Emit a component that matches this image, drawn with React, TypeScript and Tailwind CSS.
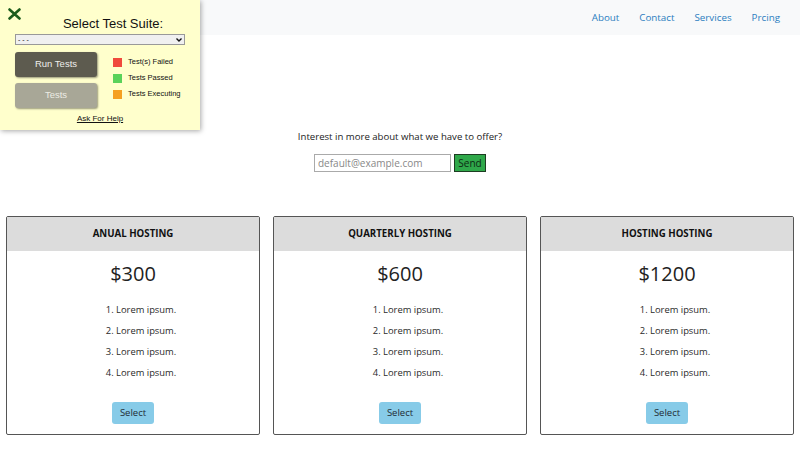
const plans = [
  { title: "ANUAL HOSTING", price: "$300" },
  { title: "QUARTERLY HOSTING", price: "$600" },
  { title: "HOSTING HOSTING", price: "$1200" },
];

export default function App() {
  return (
    <div className="relative w-[800px] h-[450px] bg-white overflow-hidden font-['Open_Sans',sans-serif] text-[#212529]">
      {/* Nav */}
      <nav className="h-[35px] bg-[#f8f9fa] flex items-center justify-end pr-[20px] pt-[1px] gap-[20px] text-[9.8px] text-[#2b7dc0]">
        <a>About</a>
        <a>Contact</a>
        <a>Services</a>
        <a>Prcing</a>
      </nav>

      {/* Newsletter */}
      <div className="flex flex-col items-center pt-[94px]">
        <p className="text-[9.6px] text-[#222] leading-[16px]">Interest in more about what we have to offer?</p>
        <div className="flex gap-[3px] mt-[9px]">
          <input
            className="w-[137px] h-[18px] border border-[#aaa] px-[3px] text-[10px] placeholder:text-[#888] outline-none"
            placeholder="default@example.com"
          />
          <button className="w-[32px] h-[18px] bg-[#2fa84a] border border-[#1d3d22] text-[10px] text-[#0c2a14] leading-none">
            Send
          </button>
        </div>
      </div>

      {/* Cards */}
      <div className="flex gap-[13px] px-[6px] mt-[44px]">
        {plans.map((p) => (
          <PlanCard key={p.title} title={p.title} price={p.price} />
        ))}
      </div>

      {/* Test overlay */}
      <TestPanel />
    </div>
  );
}

interface PlanCardProps {
  title: string;
  price: string;
}

function PlanCard({ title, price }: PlanCardProps) {
  return (
    <div className="flex-1 h-[219px] border border-[#555] rounded-[2px] overflow-hidden flex flex-col items-center">
      <div className="w-full h-[34px] bg-[#dcdcdc] flex items-center justify-center pt-[1px] text-[9.7px] font-bold text-[#111]">
        {title}
      </div>
      <div className="text-[20px] text-[#222] mt-[9px] leading-[28px]">{price}</div>
      <ol className="mt-[14px] pl-[16px] flex flex-col gap-[5px] text-[9.4px] text-[#2a2a2a] leading-[16px]">
        <li>1. Lorem ipsum.</li>
        <li>2. Lorem ipsum.</li>
        <li>3. Lorem ipsum.</li>
        <li>4. Lorem ipsum.</li>
      </ol>
      <button className="mt-[21px] w-[42px] h-[22px] rounded-[3px] bg-[#87cbe8] text-[9.5px] text-[#1f2b33]">
        Select
      </button>
    </div>
  );
}

function TestPanel() {
  return (
    <div className="absolute left-0 top-0 w-[200px] h-[130px] bg-[#ffffcc] shadow-[1px_1px_5px_rgba(0,0,0,0.35)] font-['Liberation_Sans',Arial,sans-serif] text-[#111]">
      <svg className="absolute left-[8px] top-[8px]" width="13" height="12" viewBox="0 0 13 12">
        <path d="M1.5 1.5 L11.5 10.5 M11.5 1.5 L1.5 10.5" stroke="#1c5c1c" strokeWidth="2.6" strokeLinecap="round" />
      </svg>
      <div className="pt-[17px] pl-[26px] text-center text-[13px] leading-[14px]">Select Test Suite:</div>
      <div className="mx-[15px] mt-[3px] h-[11px] bg-[#f0f0f0] border border-[#999] flex items-center justify-between px-[2px] text-[7px] leading-none">
        <span>- - -</span>
        <svg width="6" height="4" viewBox="0 0 6 4">
          <path d="M0.5 0.5 L3 3 L5.5 0.5" stroke="#111" strokeWidth="1.4" fill="none" />
        </svg>
      </div>
      <div className="flex mt-[7px] pl-[15px]">
        <div className="flex flex-col gap-[6px]">
          <button className="w-[82px] h-[25px] rounded-[3px] bg-[#5d5b4f] text-[9.5px] text-[#eeeeea] shadow-[1px_1px_2px_rgba(0,0,0,0.4)]">
            Run Tests
          </button>
          <button className="w-[82px] h-[25px] rounded-[3px] bg-[#a8a797] text-[9.5px] text-[#ecece4] shadow-[1px_1px_2px_rgba(0,0,0,0.4)]">
            Tests
          </button>
        </div>
        <div className="ml-[16px] mt-[5px] flex flex-col gap-[6px] text-[7.5px] leading-[10px]">
          <LegendRow color="bg-[#f04a3c]" label="Test(s) Failed" />
          <LegendRow color="bg-[#5ad25a]" label="Tests Passed" />
          <LegendRow color="bg-[#f5a020]" label="Tests Executing" />
        </div>
      </div>
      <div className="text-center text-[8px] underline mt-[5px]">Ask For Help</div>
    </div>
  );
}

function LegendRow({ color, label }: { color: string; label: string }) {
  return (
    <div className="flex items-center gap-[6px]">
      <span className={`w-[9px] h-[9px] ${color}`} />
      <span>{label}</span>
    </div>
  );
}
